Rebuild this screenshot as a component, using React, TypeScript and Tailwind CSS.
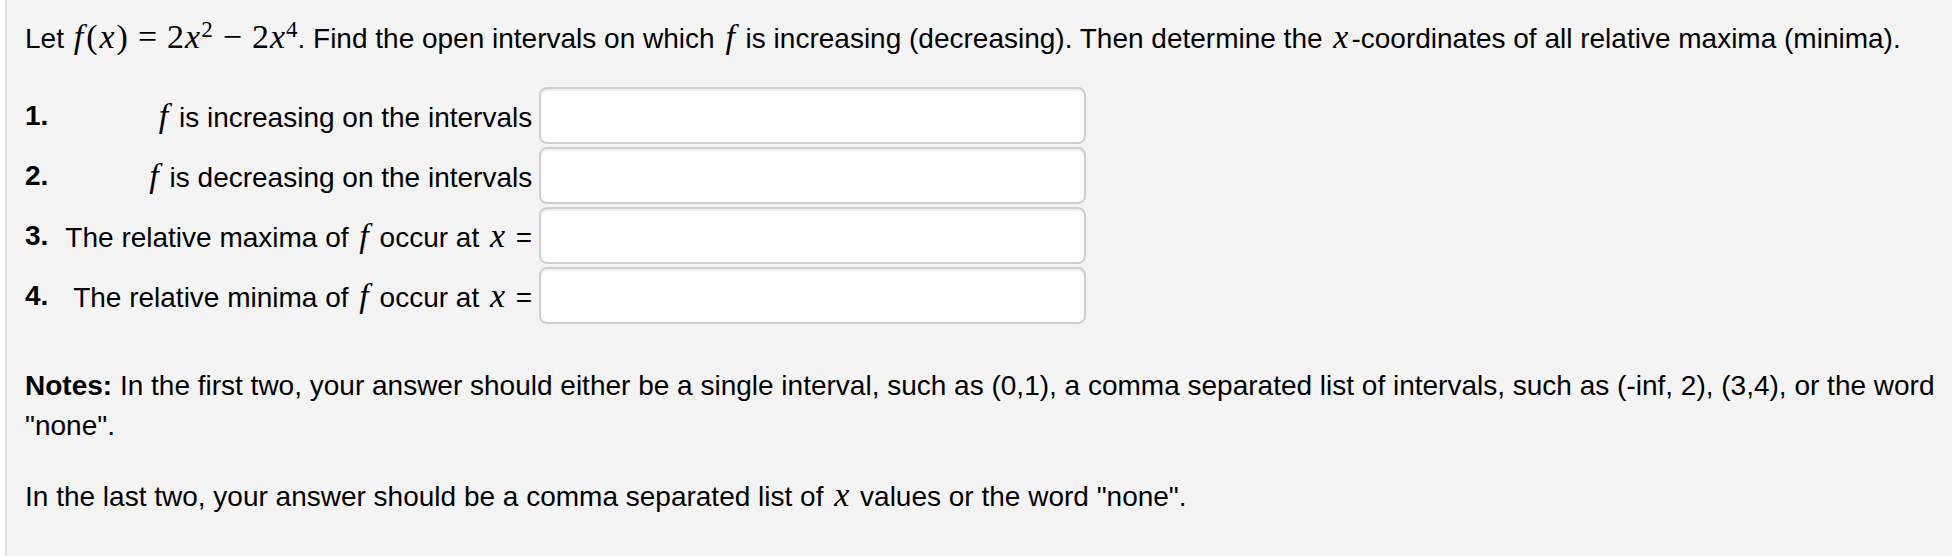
import React from 'react'

// Problème : intervalles de croissance / décroissance

const serif = "font-['Liberation_Serif','Times_New_Roman',serif]"

function V({ children }: { children: React.ReactNode }) {
  return <span className={`${serif} italic text-[34px] px-[3px]`}>{children}</span>
}

function Expr() {
  return (
    <span className={`${serif} text-[34px] whitespace-nowrap`}>
      <i className="pl-[2px] pr-[3px]">f</i>(<i className="px-[2px]">x</i>)<span className="mx-[10px]">=</span>2
      <i className="px-[1px]">x</i>
      <sup className="text-[23px]">2</sup>
      <span className="mx-[10px]">−</span>2<i className="px-[1px]">x</i>
      <sup className="text-[23px]">4</sup>
    </span>
  )
}

const rows: { n: string; label: React.ReactNode }[] = [
  { n: '1.', label: <><V>f</V> is increasing on the intervals</> },
  { n: '2.', label: <><V>f</V> is decreasing on the intervals</> },
  { n: '3.', label: <>The relative maxima of <V>f</V> occur at <V>x</V> =</> },
  { n: '4.', label: <>The relative minima of <V>f</V> occur at <V>x</V> =</> },
]

export default function App() {
  return (
    <div className="min-h-[556px] bg-white pl-[5px] font-['Liberation_Sans',Arial,sans-serif] text-[28px] text-black">
      <div className="min-h-[556px] border-l-2 border-[#dedede] bg-[#f4f4f4] pl-[18px] pr-[10px] pt-[16px]">
        <p className="leading-[42px]">
          Let <Expr />. Find the open intervals on which <V>f</V> is increasing (decreasing). Then determine the{' '}
          <V>x</V>-coordinates of all relative maxima (minima).
        </p>

        <div className="mt-[27px] grid w-fit grid-cols-[auto_auto_auto] items-center gap-y-[3px]">
          {rows.map((r) => (
            <React.Fragment key={r.n}>
              <div className="pr-[17px] font-bold">{r.n}</div>
              <div className="pr-[7px] text-right whitespace-nowrap">{r.label}</div>
              <input
                type="text"
                className="h-[57px] w-[547px] rounded-[8px] border-2 border-[#cfcfcf] bg-white shadow-[inset_0_2px_2px_rgba(0,0,0,0.07)] outline-none"
              />
            </React.Fragment>
          ))}
        </div>

        <p className="mt-[42px] leading-[40px]">
          <b>Notes:</b> In the first two, your answer should either be a single interval, such as (0,1), a comma
          separated list of intervals, such as (-inf, 2), (3,4), or the word "none".
        </p>
        <p className="mt-[29px] leading-[40px]">
          In the last two, your answer should be a comma separated list of <V>x</V> values or the word "none".
        </p>
      </div>
    </div>
  )
}
